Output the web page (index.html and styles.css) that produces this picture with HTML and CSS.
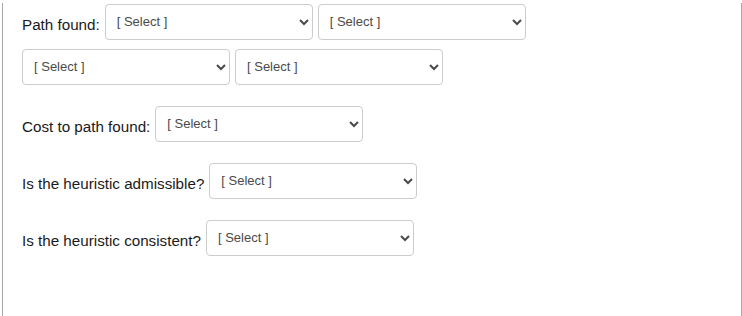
FILE: index.html
```html
<!DOCTYPE html>
<html lang="en">
<head>
<meta charset="UTF-8">
<meta name="viewport" content="width=device-width, initial-scale=1.0">
<title>Quiz question</title>
<link rel="stylesheet" href="styles.css">
</head>
<body>

<div class="quiz">
  <div class="question">
    <label class="prompt" for="path1">Path found:</label>
    <select id="path1" class="answer"><option>[ Select ]</option><option>A</option><option>B</option><option>C</option></select>
    <select class="answer"><option>[ Select ]</option><option>A</option><option>B</option><option>C</option></select>
    <select class="answer"><option>[ Select ]</option><option>A</option><option>B</option><option>C</option></select>
    <select class="answer"><option>[ Select ]</option><option>A</option><option>B</option><option>C</option></select>
  </div>

  <div class="question">
    <label class="prompt" for="cost">Cost to path found:</label>
    <select id="cost" class="answer"><option>[ Select ]</option><option>5</option><option>6</option><option>7</option></select>
  </div>

  <div class="question">
    <label class="prompt" for="admissible">Is the heuristic admissible?</label>
    <select id="admissible" class="answer"><option>[ Select ]</option><option>Yes</option><option>No</option></select>
  </div>

  <div class="question">
    <label class="prompt" for="consistent">Is the heuristic consistent?</label>
    <select id="consistent" class="answer"><option>[ Select ]</option><option>Yes</option><option>No</option></select>
  </div>
</div>

</body>
</html>
```

FILE: styles.css
```css
body {
  font-family: "Liberation Sans", Arial, sans-serif;
  background-color: #fff;
  margin: 0;
}
.quiz {
  margin: 3px 0 0 2px;
  min-height: 313px;
  padding: 1px 19px 0 19px;
  border-left: 1px solid #a6a6a6;
  border-right: 1px solid #a6a6a6;
  box-sizing: border-box;
}
.question {
  display: flex;
  flex-wrap: wrap;
  align-items: flex-start;
  gap: 9px 5px;
  margin-bottom: 21px;
}
.prompt {
  font-size: 15.2px;
  line-height: 20px;
  padding-top: 11px;
  color: #1a1a1a;
}
.answer {
  width: 208px;
  height: 36px;
  padding: 0 7px 2px 7px;
  font-family: "Liberation Sans", Arial, sans-serif;
  font-size: 13px;
  color: #4a4a4a;
  background-color: #fff;
  border: 1px solid #ccc;
  border-radius: 4px;
  box-sizing: border-box;
}
```
